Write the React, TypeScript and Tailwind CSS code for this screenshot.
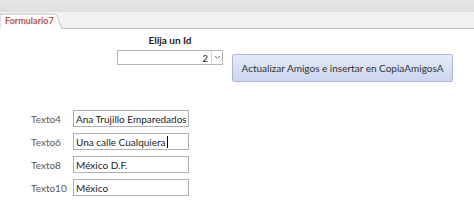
export default function App() {
  const fields = [
    { label: "Texto4", value: "Ana Trujillo Emparedados" },
    { label: "Texto6", value: "Una calle Cualquiera", caret: true },
    { label: "Texto8", value: "México D.F." },
    { label: "Texto10", value: "México" },
  ];

  return (
    <div className="h-[203px] w-[474px] overflow-hidden bg-white font-['Lato',sans-serif]">
      {/* tab strip */}
      <div className="h-[12px] bg-gradient-to-b from-[#e6e6e6] to-[#dedede]" />
      <div className="relative h-[17px] border-b border-[#c3c1c4] bg-[#f2f1ef]">
        <svg className="absolute left-0 top-[1px]" width="64" height="17" aria-hidden>
          <path d="M0 16 L0 1 L53 1 Q56 1 57 3 L62 16" fill="#fff" stroke="#c3c1c4" strokeWidth="1" />
        </svg>
        <span className="absolute left-[5px] top-[2px] whitespace-nowrap text-[9px] font-bold leading-[14px] text-[#c0504d]">
          Formulario7
        </span>
      </div>

      {/* header row */}
      <div className="flex">
        <div className="ml-[117px] flex w-[106px] flex-col items-center">
          <div className="mt-[4px] text-[10px] font-bold leading-[14px] text-[#222]">Elija un Id</div>
          <div className="mt-[3px] flex h-[15px] w-[106px] items-center border border-[#b5b5b5] bg-white">
            <span className="flex-1 pr-[3px] text-right text-[10px] leading-none text-[#222]">2</span>
            <span className="flex h-full w-[11px] items-center justify-center border-l border-[#d8d8d8]">
              <svg width="7" height="5" viewBox="0 0 7 5" aria-hidden>
                <path d="M1 1 L3.5 3.5 L6 1" fill="none" stroke="#777" strokeWidth="1" />
              </svg>
            </span>
          </div>
        </div>
        <button className="ml-[9px] mt-[25px] h-[28px] w-[221px] whitespace-nowrap rounded-[2px] border border-[#a9b8d6] bg-gradient-to-b from-[#e4ebf8] to-[#c9d6ef] text-[10px] leading-none text-[#333]">
          Actualizar Amigos e insertar en CopiaAmigosA
        </button>
      </div>

      {/* fields */}
      <div className="mt-[28px] flex flex-col gap-[6px] pl-[31px]">
        {fields.map((f) => (
          <div key={f.label} className="flex items-center">
            <span className="w-[42px] text-[10px] leading-none text-[#595959]">{f.label}</span>
            <div className="flex h-[17px] w-[116px] items-center whitespace-nowrap border border-[#b0b0b0] bg-white px-[2px] text-[10px] leading-none text-[#222]">
              {f.value}
              {f.caret ? <span className="ml-[1px] h-[12px] w-px bg-black" /> : null}
            </div>
          </div>
        ))}
      </div>
    </div>
  );
}
